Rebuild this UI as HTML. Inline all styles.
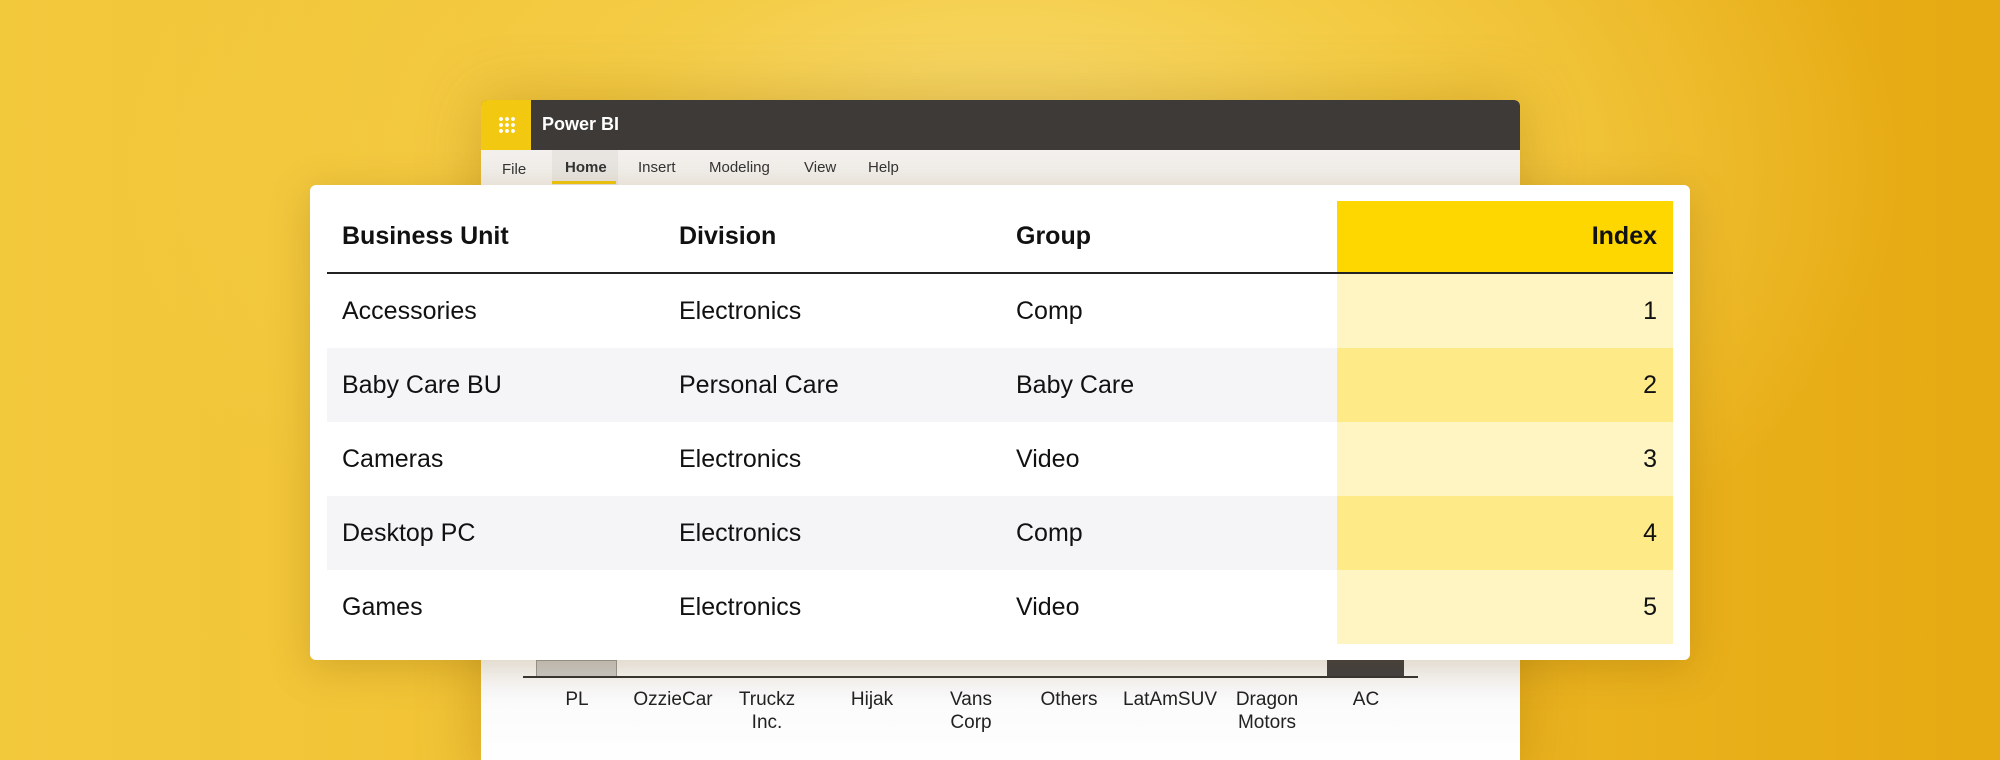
<!DOCTYPE html>
<html style="background:#efbd2e"><head><style>
html,body{margin:0;width:2000px;height:760px;overflow:hidden}
body{font-family:"Liberation Sans",sans-serif;
background:radial-gradient(ellipse 900px 520px at 1000px 170px,#f8dc74 0%,#f4cc45 45%,rgba(240,190,40,0) 100%),linear-gradient(90deg,#f3c93c 0%,#efbd2e 50%,#e6aa12 100%);position:relative}
.win{position:absolute;left:481px;top:100px;width:1039px;height:680px;background:linear-gradient(#fff,#f6f6f8 70%,#fff);border-radius:6px 6px 0 0;box-shadow:0 0 60px rgba(150,100,0,.35);overflow:hidden}
.hdr{height:50px;background:#3e3a37;position:relative}
.sq{position:absolute;left:0;top:0;width:50px;height:50px;background:#f2c811}
.dots{position:absolute;left:17px;top:16px;width:18px;height:18px;background:radial-gradient(circle,#fff 1.7px,transparent 2.2px) 0 0/6px 6px}
.title{position:absolute;left:61px;top:14px;color:#fff;font-weight:bold;font-size:18px}
.menu{height:36px;background:#f3f0ed;position:relative;font-size:15px;color:#333}
.menu span{position:absolute;top:9px;z-index:2}
.card{position:absolute;left:310px;top:185px;width:1380px;height:475px;background:#fff;border-radius:6px;box-shadow:0 8px 40px rgba(120,80,0,.25)}
table{position:absolute;left:17px;top:16px;width:1346px;border-collapse:collapse;font-size:25px;color:#111;table-layout:fixed}
td,th{height:74px;padding:0 0 0 15px;text-align:left}
th{height:71px;font-weight:bold;border-bottom:2px solid #222}
td.i,th.i{text-align:right;padding-right:16px}
th.i{background:#fed700}
tr.s td{background:#f5f5f7}
tr td.i{background:#fef5c3}
tr.s td.i{background:#feea87}
.ax{position:absolute;left:523px;top:676px;width:895px;height:2px;background:#333}
.bar{position:absolute;top:660px;height:16px}
.lb{position:absolute;top:688px;font-size:19px;color:#222;text-align:center;line-height:23px;transform:translateX(-50%)}
</style></head><body>
<div class="win">
<div class="hdr"><div class="sq"><div class="dots"></div></div><div class="title">Power BI</div></div>
<div class="menu">
<div style="position:absolute;left:71px;top:0;width:66px;height:36px;background:#e9e6e2"></div>
<div style="position:absolute;left:71px;top:31px;width:64px;height:3px;background:#f2c811"></div>
<span style="left:21px;top:11px">File</span><span style="left:84px;font-weight:bold">Home</span><span style="left:157px">Insert</span><span style="left:228px">Modeling</span><span style="left:323px">View</span><span style="left:387px">Help</span>
</div>
</div>
<div class="bar" style="left:536px;width:79px;background:#ccc;border:1px solid #999;border-bottom:0"></div>
<div class="bar" style="left:1327px;width:77px;background:#3f3f44"></div>
<div class="ax"></div>
<div class="lb" style="left:577px">PL</div><div class="lb" style="left:673px">OzzieCar</div><div class="lb" style="left:767px">Truckz<br>Inc.</div><div class="lb" style="left:872px">Hijak</div><div class="lb" style="left:971px">Vans<br>Corp</div><div class="lb" style="left:1069px">Others</div><div class="lb" style="left:1170px">LatAmSUV</div><div class="lb" style="left:1267px">Dragon<br>Motors</div><div class="lb" style="left:1366px">AC</div>
<div class="card"><table>
<colgroup><col style="width:337px"><col style="width:337px"><col style="width:336px"><col style="width:336px"></colgroup>
<tr><th>Business Unit</th><th>Division</th><th>Group</th><th class="i">Index</th></tr>
<tr><td>Accessories</td><td>Electronics</td><td>Comp</td><td class="i">1</td></tr>
<tr class="s"><td>Baby Care BU</td><td>Personal Care</td><td>Baby Care</td><td class="i">2</td></tr>
<tr><td>Cameras</td><td>Electronics</td><td>Video</td><td class="i">3</td></tr>
<tr class="s"><td>Desktop PC</td><td>Electronics</td><td>Comp</td><td class="i">4</td></tr>
<tr><td>Games</td><td>Electronics</td><td>Video</td><td class="i">5</td></tr>
</table></div>
</body></html>
